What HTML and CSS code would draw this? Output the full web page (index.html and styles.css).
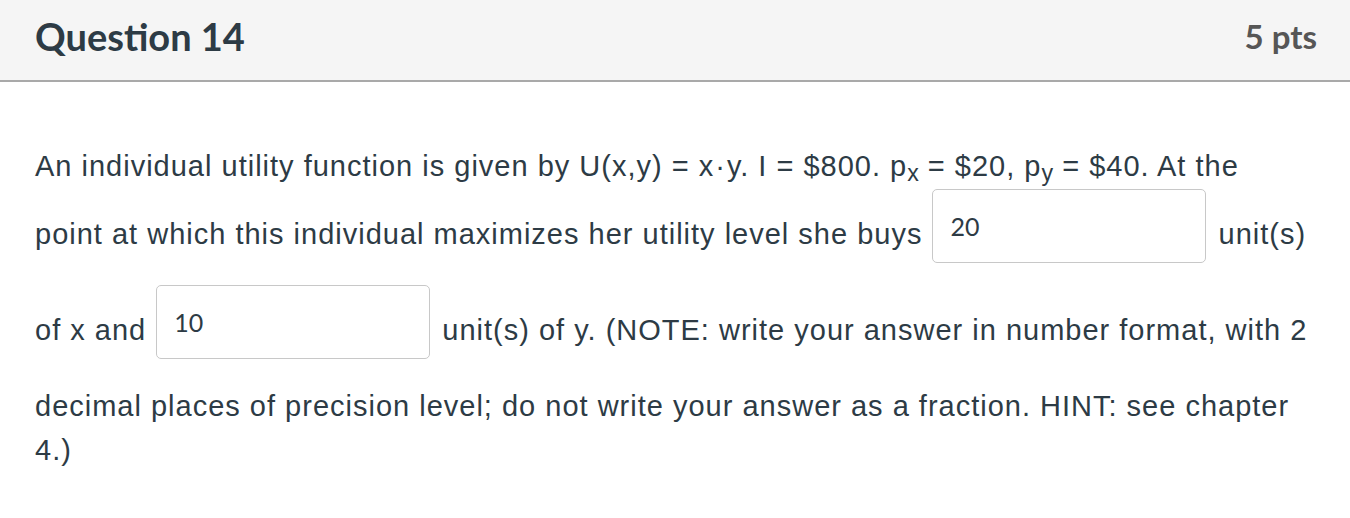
FILE: index.html
```html
<!DOCTYPE html>
<html>
<head>
<meta charset="utf-8">
<link rel="stylesheet" href="styles.css">
</head>
<body>
<div class="question">
  <div class="question-header">
    <h2 class="question-title">Question 14</h2>
    <span class="question-points">5 pts</span>
  </div>
  <div class="question-body">
    <p class="question-text">An individual utility function is given by U(x,y) = x<span class="dot">·</span>y. I = $800. p<sub class="sub">x</sub> = $20, p<sub class="sub">y</sub> = $40. At the point at which this individual maximizes her utility level she buys <input class="answer" type="text" value="20"> unit(s) of x and <input class="answer" type="text" value="10"> unit(s) of y. (NOTE: write your answer in number format, with 2 decimal places of precision level; do not write your answer as a fraction. HINT: see chapter 4.)</p>
  </div>
</div>
</body>
</html>
```
FILE: styles.css
```css
html, body {
  margin: 0;
  padding: 0;
  background: #ffffff;
}

.question {
  width: 1350px;
}

.question-header {
  display: flex;
  align-items: center;
  justify-content: space-between;
  height: 72px;
  padding: 0 33px 8px 35px;
  background: #f5f5f5;
  border-bottom: 2px solid #a9a9a9;
}

.question-title {
  margin: 0;
  font-family: Lato, "Liberation Sans", sans-serif;
  font-weight: 700;
  font-size: 38px;
  color: #2d3b45;
  line-height: 1;
}

.question-points {
  font-family: Lato, "Liberation Sans", sans-serif;
  font-weight: 700;
  font-size: 33px;
  color: #565656;
  line-height: 1;
}

.question-body {
  padding: 62px 38px 0 35px;
}

.question-text {
  margin: 0;
  font-family: "Liberation Sans", Arial, sans-serif;
  font-size: 29px;
  letter-spacing: 1px;
  line-height: 44px;
  color: #2d3b45;
}

.dot {
  padding: 0 1px;
}

.sub {
  font-size: 0.8em;
  vertical-align: -5px;
  line-height: 37px;
  letter-spacing: 0;
}

.answer {
  box-sizing: border-box;
  width: 274px;
  height: 74px;
  margin: -3px 3px 25px 1px;
  padding: 0 17px;
  border: 1px solid #c8c8c8;
  border-radius: 5px;
  background: #ffffff;
  font-family: Lato, "Liberation Sans", sans-serif;
  font-size: 25px;
  letter-spacing: 0;
  color: #2d3b45;
  vertical-align: 8px;
  outline: none;
}
```
